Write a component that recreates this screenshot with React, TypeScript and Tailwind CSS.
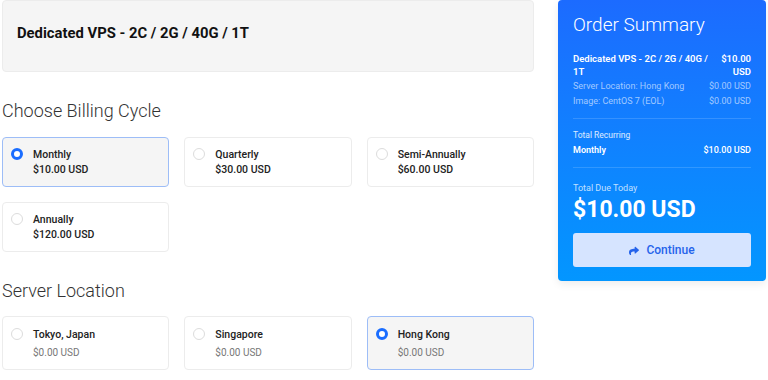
import React, { useState } from "react";

const billing = [
  { name: "Monthly", price: "$10.00 USD" },
  { name: "Quarterly", price: "$30.00 USD" },
  { name: "Semi-Annually", price: "$60.00 USD" },
  { name: "Annually", price: "$120.00 USD" },
];

const locations = [
  { name: "Tokyo, Japan", price: "$0.00 USD" },
  { name: "Singapore", price: "$0.00 USD" },
  { name: "Hong Kong", price: "$0.00 USD" },
];

const Radio = ({ checked }: { checked: boolean }) =>
  checked ? (
    <span className="mt-[1px] block h-[12px] w-[12px] shrink-0 rounded-full border-[3px] border-[#1a6dff] bg-white" />
  ) : (
    <span className="mt-[1px] block h-[12px] w-[12px] shrink-0 rounded-full border border-[#dcdcdc] bg-white" />
  );

export default function App() {
  const [cycle, setCycle] = useState(0);
  const [loc, setLoc] = useState(2);

  return (
    <div className="flex h-[380px] w-[768px] gap-[24px] overflow-hidden bg-white pl-[2px] font-['Roboto',sans-serif] text-[#222]">
      {/* Left column */}
      <div className="w-[532px] shrink-0">
        <div className="h-[72px] rounded-[4px] border border-[#ececec] bg-[#f5f5f5] px-[14px] pt-[22px]">
          <h1 className="text-[14.8px] font-bold leading-[20px] text-[#111]">
            Dedicated VPS - 2C / 2G / 40G / 1T
          </h1>
        </div>

        <h2 className="mt-[27px] text-[18px] font-light leading-[24px] text-[#333]">
          Choose Billing Cycle
        </h2>
        <div className="mt-[14px] grid grid-cols-3 gap-x-[15px] gap-y-[15px]">
          {billing.map((b, i) => (
            <button
              key={b.name}
              onClick={() => setCycle(i)}
              className={`flex h-[50px] items-start gap-[10px] rounded-[4px] border pl-[8px] pt-[9px] text-left ${
                cycle === i ? "border-[#9dbdf7] bg-[#f5f5f5]" : "border-[#ececec] bg-white"
              }`}
            >
              <Radio checked={cycle === i} />
              <div className="leading-[15px]">
                <div className="text-[10.5px] font-medium text-[#222]">{b.name}</div>
                <div className="text-[10.5px] font-medium text-[#222]">{b.price}</div>
              </div>
            </button>
          ))}
        </div>

        <h2 className="mt-[27px] text-[18px] font-light leading-[24px] text-[#333]">
          Server Location
        </h2>
        <div className="mt-[13px] grid grid-cols-3 gap-x-[15px]">
          {locations.map((l, i) => (
            <button
              key={l.name}
              onClick={() => setLoc(i)}
              className={`flex h-[54px] items-start gap-[10px] rounded-[4px] border pl-[8px] pt-[10px] text-left ${
                loc === i ? "border-[#9dbdf7] bg-[#f5f5f5]" : "border-[#ececec] bg-white"
              }`}
            >
              <Radio checked={loc === i} />
              <div>
                <div className="text-[10.5px] font-medium leading-[15px] text-[#222]">{l.name}</div>
                <div className="mt-[3px] text-[10px] leading-[15px] text-[#777]">{l.price}</div>
              </div>
            </button>
          ))}
        </div>
      </div>

      {/* Order summary */}
      <div className="h-[281px] w-[208px] shrink-0 rounded-[4px] bg-gradient-to-b from-[#1c6bff] to-[#0396ff] px-[15px] pt-[12px] text-white shadow-[0_3px_8px_rgba(0,0,0,0.08)]">
        <h3 className="text-[19px] font-light leading-[26px]">Order Summary</h3>

        <div className="mt-[14px] flex justify-between text-[9.5px] font-semibold leading-[13px]">
          <span className="w-[140px]">Dedicated VPS - 2C / 2G / 40G / 1T</span>
          <span className="text-right">
            $10.00
            <br />
            USD
          </span>
        </div>
        <div className="mt-[1px] flex justify-between text-[9px] leading-[15px] text-white/60">
          <span>Server Location: Hong Kong</span>
          <span>$0.00 USD</span>
        </div>
        <div className="flex justify-between text-[9px] leading-[15px] text-white/60">
          <span>Image: CentOS 7 (EOL)</span>
          <span>$0.00 USD</span>
        </div>

        <div className="mt-[9px] border-t border-white/15" />

        <div className="mt-[10px] text-[8.5px] leading-[12px] text-white/85">Total Recurring</div>
        <div className="mt-[3px] flex justify-between text-[9px] font-semibold leading-[13px]">
          <span>Monthly</span>
          <span className="font-medium">$10.00 USD</span>
        </div>

        <div className="mt-[10px] border-t border-white/15" />

        <div className="mt-[14px] text-[9px] leading-[12px] text-white/75">Total Due Today</div>
        <div className="mt-[2px] text-[23px] font-bold leading-[28px]">$10.00 USD</div>

        <button className="mt-[9px] flex h-[34px] w-full items-center justify-center gap-[7px] rounded-[3px] bg-[#d6e4ff] text-[12px] font-medium text-[#2563eb]">
          <svg width="10" height="9" viewBox="0 0 512 448" fill="currentColor">
            <path d="M503.7 189.8 327.7 37.9C312.3 24.5 288 35.3 288 56v80.1C127.4 137.9 0 170.1 0 322.3c0 61.4 39.6 122.3 83.3 154.1 13.7 9.9 33.1-2.5 28.1-18.6C66.1 312.8 132.9 274.3 288 272.1V360c0 20.7 24.3 31.5 39.7 18.2l176-152c11.1-9.6 11.1-26.8 0-36.4z" />
          </svg>
          Continue
        </button>
      </div>
    </div>
  );
}
